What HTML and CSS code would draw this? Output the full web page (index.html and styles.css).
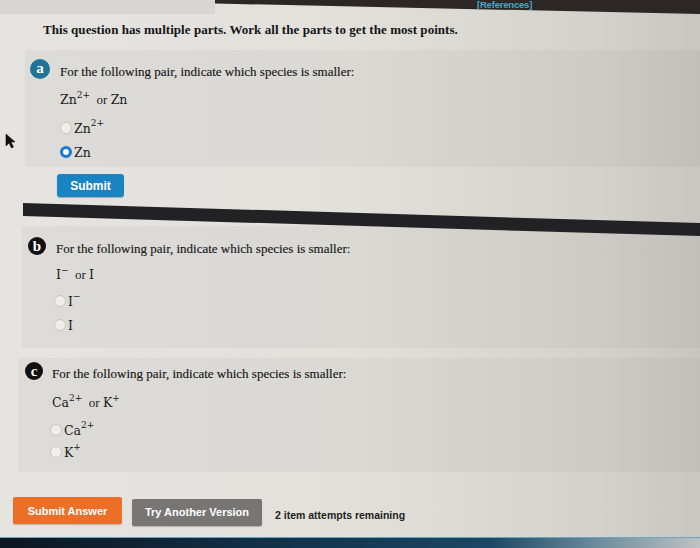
FILE: index.html
```html
<!DOCTYPE html>
<html>
<head>
<meta charset="utf-8">
<link rel="stylesheet" href="styles.css">
</head>
<body>
<div class="screen">
  <div class="topbar">
    <div class="top-left"></div>
    <div class="top-dark"><span class="refs">[References]</span></div>
  </div>
  <div class="intro">This question has multiple parts. Work all the parts to get the most points.</div>

  <section class="part part-a">
    <div class="q-row">
      <span class="badge badge-teal">a</span>
      <span class="q-text">For the following pair, indicate which species is smaller:</span>
    </div>
    <div class="pair"><span class="chem">Zn<sup>2+</sup></span>&nbsp; or <span class="chem">Zn</span></div>
    <div class="opt first"><span class="radio"></span><span class="chem">Zn<sup>2+</sup></span></div>
    <div class="opt"><span class="radio checked"></span><span class="chem">Zn</span></div>
  </section>
  <div class="submit-wrap"><button class="btn-submit">Submit</button></div>
  <div class="divider"></div>

  <section class="part part-b">
    <div class="q-row">
      <span class="badge badge-black">b</span>
      <span class="q-text">For the following pair, indicate which species is smaller:</span>
    </div>
    <div class="pair"><span class="chem">I<sup>−</sup></span>&nbsp; or <span class="chem">I</span></div>
    <div class="opt first"><span class="radio"></span><span class="chem">I<sup>−</sup></span></div>
    <div class="opt"><span class="radio"></span><span class="chem">I</span></div>
  </section>

  <section class="part part-c">
    <div class="q-row">
      <span class="badge badge-black">c</span>
      <span class="q-text">For the following pair, indicate which species is smaller:</span>
    </div>
    <div class="pair"><span class="chem">Ca<sup>2+</sup></span>&nbsp; or <span class="chem">K<sup>+</sup></span></div>
    <div class="opt first"><span class="radio"></span><span class="chem">Ca<sup>2+</sup></span></div>
    <div class="opt"><span class="radio"></span><span class="chem">K<sup>+</sup></span></div>
  </section>

  <div class="footer">
    <button class="btn btn-orange">Submit Answer</button>
    <button class="btn btn-grey">Try Another Version</button>
    <span class="attempts">2 item attempts remaining</span>
  </div>
  <div class="bottombar"></div>

  <svg class="cursor" width="12" height="16" viewBox="0 0 12 16"><path d="M1 1 L1 13 L4 10 L6.5 15 L8.5 14 L6 9 L10 9 Z" fill="#111" stroke="#111" stroke-width="0.6" stroke-linejoin="round"/></svg>
</div>
</body>
</html>
```
FILE: styles.css
```css
html, body {
  margin: 0;
  padding: 0;
}
body {
  width: 700px;
  height: 548px;
  overflow: hidden;
  font-family: "Liberation Serif", "Times New Roman", serif;
  color: #1c1c1c;
}
.screen {
  position: relative;
  width: 700px;
  height: 548px;
  overflow: hidden;
  background: linear-gradient(90deg, #e6e4e0 0%, #e2e0db 50%, #d4d2cd 85%, #c8c6c1 100%);
}
.topbar {
  display: flex;
  height: 14px;
}
.top-left {
  width: 215px;
  background: #d8d6d2;
}
.top-dark {
  flex: 1;
  position: relative;
  background: #2c2624;
  clip-path: polygon(0 0, 100% 0, 100% 100%, 0 25%);
}
.refs {
  position: absolute;
  left: 262px;
  top: 0;
  line-height: 10px;
  font-family: "Liberation Sans", Arial, sans-serif;
  font-size: 9.5px;
  font-weight: bold;
  color: #4ea8c6;
  letter-spacing: -0.2px;
}
.intro {
  padding: 8px 0 12px 43px;
  line-height: 16px;
  font-size: 13px;
  font-weight: bold;
  letter-spacing: 0.05px;
  color: #151515;
}
.part {
  background: rgba(0, 0, 0, 0.03);
}
.q-row {
  display: flex;
  align-items: center;
  height: 21px;
}
.badge {
  display: flex;
  align-items: center;
  justify-content: center;
  border-radius: 50%;
  color: #fff;
  font-weight: bold;
  font-family: "Liberation Serif", serif;
  flex: none;
}
.badge-teal {
  width: 20px;
  height: 20px;
  background: #1f7496;
  font-size: 15px;
  line-height: 1;
}
.badge-black {
  width: 18px;
  height: 18px;
  background: #111;
  font-size: 15px;
  line-height: 1;
}
.q-text {
  font-size: 13px;
  margin-top: 6px;
  color: #161616;
  -webkit-text-stroke: 0.15px #161616;
}
.pair {
  font-size: 13px;
  line-height: 20px;
  color: #1a1a1a;
}
.chem {
  font-family: "DejaVu Serif", "Liberation Serif", serif;
  font-size: 12.5px;
  color: #1a1a1a;
}
sup {
  font-size: 9px;
  line-height: 0;
  position: relative;
  top: -1px;
}
.opt {
  display: flex;
  align-items: center;
  height: 20px;
}
.radio {
  width: 10px;
  height: 10px;
  border-radius: 50%;
  border: 1px solid #c8c6c2;
  background: #efeeeb;
  flex: none;
  margin-right: 2px;
}
.radio.checked {
  width: 6px;
  height: 6px;
  border: 3px solid #1978d4;
  background: #fff;
}

/* part a */
.part-a {
  height: 109px;
  padding-top: 8px;
  margin-left: 25px;
}
.part-a .q-row { padding-left: 5px; }
.part-a .badge { margin-right: 10px; }
.part-a .pair { margin: 11px 0 0 35px; }
.part-a .opt { margin-left: 35px; margin-top: 4px; }
.part-a .opt.first { margin-top: 8px; }

.submit-wrap {
  padding: 7px 0 0 57px;
  height: 29px;
}
.btn-submit {
  display: block;
  width: 67px;
  height: 23px;
  border: none;
  border-radius: 3px;
  background: #1a84c2;
  color: #fff;
  font-family: "Liberation Sans", Arial, sans-serif;
  font-size: 12px;
  font-weight: bold;
  padding: 0;
  box-shadow: 0 1px 1px rgba(0,0,0,0.25);
}
.divider {
  margin-left: 23px;
  height: 13px;
  background: #222124;
  transform-origin: left top;
  transform: skewY(1.7deg);
}

/* part b */
.part-b {
  margin-top: 10px;
  height: 111px;
  padding-top: 11px;
  margin-left: 22px;
}
.part-b .q-row { height: 18px; padding-left: 6px; }
.part-b .badge { margin-right: 10px; }
.part-b .pair { margin: 10px 0 0 34px; }
.part-b .opt { margin-left: 32px; margin-top: 4px; }
.part-b .opt.first { margin-top: 6px; }

/* part c */
.part-c {
  margin-top: 10px;
  height: 110px;
  padding-top: 4px;
  margin-left: 18px;
}
.part-c .q-row { height: 18px; padding-left: 7px; }
.part-c .badge { margin-right: 9px; }
.part-c .pair { margin: 13px 0 0 34px; }
.part-c .opt { margin-left: 32px; margin-top: 2px; }
.part-c .opt.first { margin-top: 7px; }

.footer {
  display: flex;
  align-items: center;
  padding: 25px 0 0 13px;
  height: 27px;
}
.btn {
  height: 27px;
  border: none;
  border-radius: 2px;
  color: #fff;
  font-family: "Liberation Sans", Arial, sans-serif;
  font-size: 11px;
  font-weight: bold;
  padding: 0;
  box-shadow: 0 1px 1px rgba(0,0,0,0.2);
}
.btn-orange {
  width: 109px;
  background: #ec6f28;
}
.btn-grey {
  width: 130px;
  margin-left: 10px;
  background: #787674;
  margin-top: 3px;
}
.attempts {
  margin-left: 13px;
  margin-top: 8px;
  font-family: "Liberation Sans", Arial, sans-serif;
  font-size: 10.5px;
  font-weight: bold;
  color: #222;
}
.bottombar {
  margin-top: 13px;
  height: 12px;
  background: linear-gradient(90deg, #0d1620 0%, #12324a 40%, #1a4864 70%, #6b8a9c 85%, #bfc2c2 100%);
  border-top: 1px solid #6aa6c4;
}
.cursor {
  position: absolute;
  left: 5px;
  top: 133px;
}
```
